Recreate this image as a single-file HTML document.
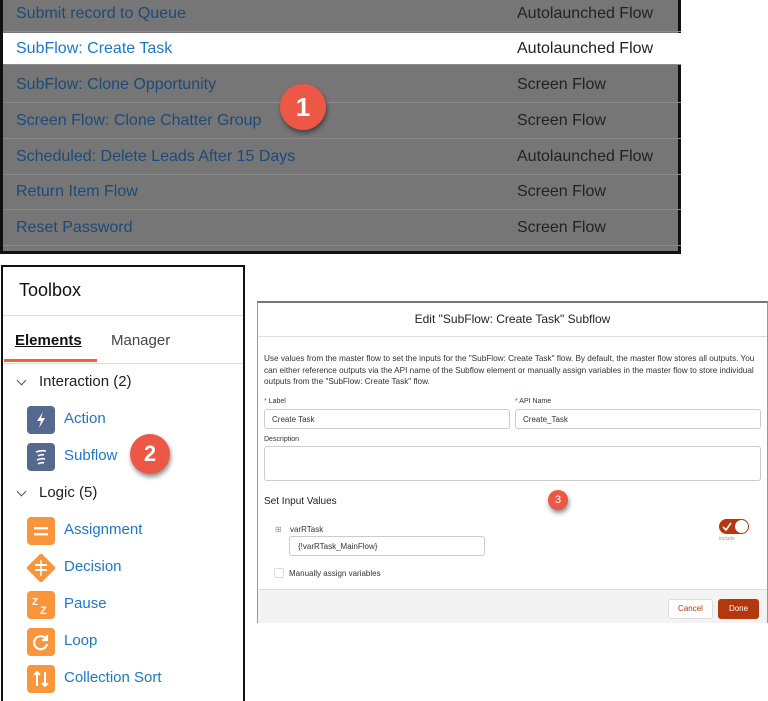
<!DOCTYPE html>
<html><head><meta charset="utf-8"><style>
*{box-sizing:border-box;margin:0;padding:0}
body{width:768px;height:701px;background:#fff;position:relative;overflow:hidden;font-family:"Liberation Sans",Arial,sans-serif}
.abs{position:absolute}
#top{left:0;top:0;width:681px;height:254px;background:#767676;border:3px solid #111;border-top:none}
.row{position:absolute;left:0;width:678px;height:36px;border-bottom:1px solid #8a8a8a}
.row span{position:absolute;top:50%;transform:translateY(-50%);font-size:16px;white-space:nowrap}
.row .a{left:13px;color:#1d4a78}
.row .b{left:514px;color:#222}
.row.w{background:#fff}
.row.w .a{color:#1a78cf}
.badge{position:absolute;border-radius:50%;background:#ec5845;color:#fff;font-weight:bold;display:flex;align-items:center;justify-content:center;box-shadow:1px 3px 5px rgba(0,0,0,.45)}
#tb{left:1px;top:265px;width:244px;height:436px;border:2px solid #111;border-bottom:none}
.ic{position:absolute;left:24px;width:28px;height:28px;border-radius:4px}
.lbl{position:absolute;left:61px;font-size:15px;color:#1a78cf}
.grp{position:absolute;left:36px;font-size:15px;color:#222}
.chev{position:absolute;left:15px;width:7px;height:7px;border-right:1.4px solid #555;border-bottom:1.4px solid #555;transform:rotate(45deg)}
#md{left:257px;top:301px;width:511px;height:322px;border:1px solid #999;border-top:2px solid #777;background:#fff}
.t{position:absolute;font-size:8px;color:#333;white-space:nowrap}
.inp{position:absolute;border:1px solid #ccc;border-radius:3px;background:#fff}
</style></head><body>
<div id="top" class="abs">
 <div class="row" style="top:-4px"><span class="a">Submit record to Queue</span><span class="b">Autolaunched Flow</span></div>
 <div class="row w" style="top:33px;height:32px"><span class="a">SubFlow: Create Task</span><span class="b">Autolaunched Flow</span></div>
 <div class="row" style="top:67px"><span class="a">SubFlow: Clone Opportunity</span><span class="b">Screen Flow</span></div>
 <div class="row" style="top:103px"><span class="a">Screen Flow: Clone Chatter Group</span><span class="b">Screen Flow</span></div>
 <div class="row" style="top:139px"><span class="a">Scheduled: Delete Leads After 15 Days</span><span class="b">Autolaunched Flow</span></div>
 <div class="row" style="top:174px"><span class="a">Return Item Flow</span><span class="b">Screen Flow</span></div>
 <div class="row" style="top:210px"><span class="a">Reset Password</span><span class="b">Screen Flow</span></div>
 <div class="badge" style="left:277px;top:84px;width:46px;height:46px;font-size:26px">1</div>
</div>

<div id="tb" class="abs">
 <div class="abs" style="left:16px;top:13px;font-size:18px;color:#111">Toolbox</div>
 <div class="abs" style="left:0;top:48px;width:240px;border-top:1px solid #ddd"></div>
 <div class="abs" style="left:12px;top:65px;font-size:15px;font-weight:bold;color:#111;text-decoration:underline">Elements</div>
 <div class="abs" style="left:108px;top:65px;font-size:15px;color:#444">Manager</div>
 <div class="abs" style="left:1px;top:92px;width:93px;height:3px;background:#f0623a"></div>
 <div class="abs" style="left:0;top:96px;width:240px;border-top:1px solid #ddd"></div>
 <div class="chev" style="top:110px"></div><div class="grp" style="top:106px">Interaction (2)</div>
 <div class="ic" style="top:139px;background:#54698d"><svg width="28" height="28"><path d="M16 6 L10 15 H14 L12 22 L18 12 H14 Z" fill="#fff"/></svg></div>
 <div class="lbl" style="top:143px">Action</div>
 <div class="ic" style="top:176px;background:#54698d"><svg width="28" height="28" fill="none" stroke="#fff" stroke-width="1.6"><path d="M9 9 Q14 7 19 8 M11 13 Q14 11 17 12 M10 17 Q14 15 18 16 M11 21 Q14 19 17 20"/></svg></div>
 <div class="lbl" style="top:180px">Subflow</div>
 <div class="badge" style="left:127px;top:167px;width:40px;height:40px;font-size:22px">2</div>
 <div class="chev" style="top:221px"></div><div class="grp" style="top:217px">Logic (5)</div>
 <div class="ic" style="top:250px;background:#f9953b"><svg width="28" height="28"><rect x="7" y="10" width="14" height="2.4" fill="#fff"/><rect x="7" y="16" width="14" height="2.4" fill="#fff"/></svg></div>
 <div class="lbl" style="top:254px">Assignment</div>
 <div class="ic" style="top:287px;background:transparent"><svg width="28" height="28"><path d="M14 -1 L29 14 L14 29 L-1 14 Z" fill="#f9953b"/><rect x="8" y="10" width="12" height="2" fill="#fff"/><rect x="8" y="15" width="12" height="2" fill="#fff"/><path d="M14 6 L14 22" stroke="#fff" stroke-width="1.5"/></svg></div>
 <div class="lbl" style="top:291px">Decision</div>
 <div class="ic" style="top:324px;background:#f9953b"><svg width="28" height="28"><text x="5" y="14" font-size="10" font-weight="bold" fill="#fff" font-family="Liberation Sans">Z</text><text x="13" y="23" font-size="11" font-weight="bold" fill="#fff" font-family="Liberation Sans">Z</text></svg></div>
 <div class="lbl" style="top:328px">Pause</div>
 <div class="ic" style="top:361px;background:#f9953b"><svg width="28" height="28" fill="none" stroke="#fff" stroke-width="2.2"><path d="M19 11 A6.5 6.5 0 1 0 20 16"/><path d="M20 7 V12 H15"/></svg></div>
 <div class="lbl" style="top:365px">Loop</div>
 <div class="ic" style="top:398px;background:#f9953b"><svg width="28" height="28" fill="none" stroke="#fff" stroke-width="2"><path d="M10 21 V7 M7 10 L10 7 L13 10 M18 7 V21 M15 18 L18 21 L21 18"/></svg></div>
 <div class="lbl" style="top:402px">Collection Sort</div>
</div>

<div id="md" class="abs">
 <div class="abs" style="left:0;top:0;width:509px;height:34px;border-bottom:1px solid #ddd;text-align:center;line-height:32px;font-size:12px;color:#222">Edit "SubFlow: Create Task" Subflow</div>
 <div class="t" style="left:6px;top:50px;line-height:11.7px;white-space:normal;width:498px;font-size:8.2px">Use values from the master flow to set the inputs for the "SubFlow: Create Task" flow. By default, the master flow stores all outputs. You can either reference outputs via the API name of the Subflow element or manually assign variables in the master flow to store individual outputs from the "SubFlow: Create Task" flow.</div>
 <div class="t" style="left:6px;top:95px;font-size:7px"><span style="color:#c23934">*</span> Label</div>
 <div class="t" style="left:257px;top:95px;font-size:7px"><span style="color:#c23934">*</span> API Name</div>
 <div class="inp" style="left:6px;top:106px;width:246px;height:20px"></div>
 <div class="t" style="left:14px;top:112px">Create Task</div>
 <div class="inp" style="left:257px;top:106px;width:246px;height:20px"></div>
 <div class="t" style="left:265px;top:112px">Create_Task</div>
 <div class="t" style="left:6px;top:133px;font-size:7px">Description</div>
 <div class="inp" style="left:6px;top:143px;width:497px;height:35px"></div>
 <div class="abs" style="left:6px;top:193px;font-size:10px;color:#222">Set Input Values</div>
 <div class="badge" style="left:290px;top:187px;width:20px;height:20px;font-size:11px;font-weight:normal">3</div>
 <div class="t" style="left:17px;top:222px;color:#999">⊞</div>
 <div class="t" style="left:32px;top:222px">varRTask</div>
 <div class="inp" style="left:31px;top:233px;width:196px;height:20px"></div>
 <div class="t" style="left:40px;top:239px">{!varRTask_MainFlow}</div>
 <div class="abs" style="left:461px;top:216px;width:30px;height:15px;border-radius:8px;background:#b4380e"><div class="abs" style="right:1px;top:1px;width:13px;height:13px;border-radius:50%;background:#fff"></div><svg class="abs" style="left:3px;top:3px" width="10" height="9"><path d="M1 5 L4 8 L9 1" stroke="#fff" stroke-width="1.6" fill="none"/></svg></div>
 <div class="t" style="left:461px;top:233px;font-size:5px;color:#999">include</div>
 <div class="abs" style="left:16px;top:265px;width:10px;height:10px;border:1px solid #ddd;border-radius:2px"></div>
 <div class="t" style="left:31px;top:266px">Manually assign variables</div>
 <div class="abs" style="left:0;top:286px;width:509px;height:34px;background:#f3f3f3;border-top:1px solid #ddd"></div>
 <div class="abs" style="left:410px;top:296px;width:45px;height:20px;border:1px solid #ddd;border-radius:3px;background:#fff;color:#b4380e;font-size:8px;text-align:center;line-height:18px">Cancel</div>
 <div class="abs" style="left:460px;top:296px;width:41px;height:20px;border-radius:3px;background:#b4380e;color:#fff;font-size:8px;text-align:center;line-height:20px">Done</div>
</div>
</body></html>
